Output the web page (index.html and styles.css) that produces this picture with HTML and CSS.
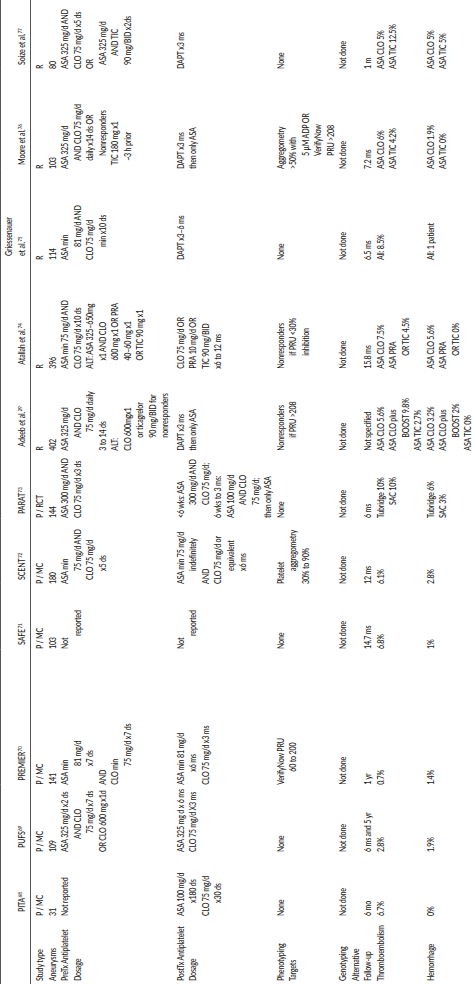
FILE: index.html
```html
<!DOCTYPE html>
<html lang="en">
<head>
<meta charset="utf-8">
<title>Antiplatelet regimens table</title>
<link rel="stylesheet" href="styles.css">
</head>
<body>
<div class="page">
  <div class="rot">
    <table class="t">
      <colgroup>
        <col class="c-lab"><col class="c-pita"><col class="c-pufs"><col class="c-premier"><col class="c-safe"><col class="c-scent"><col class="c-parat"><col class="c-adeeb"><col class="c-atallah"><col class="c-gries"><col class="c-moore"><col class="c-soize">
      </colgroup>
      <thead>
        <tr>
          <th></th>
          <th>PITA<sup>68</sup></th>
          <th>PUFS<sup>69</sup></th>
          <th>PREMIER<sup>70</sup></th>
          <th>SAFE<sup>71</sup></th>
          <th>SCENT<sup>72</sup></th>
          <th>PARAT<sup>73</sup></th>
          <th>Adeeb et al.<sup>29</sup></th>
          <th>Atallah et al.<sup>74</sup></th>
          <th><span class="l">Griessenauer</span><span class="l">et al.<sup>75</sup></span></th>
          <th>Moore et al.<sup>76</sup></th>
          <th>Soize et al.<sup>77</sup></th>
        </tr>
      </thead>
      <tbody>
        <tr class="first">
          <td class="lab">Study type</td>
          <td>P / MC</td><td>P / MC</td><td>P / MC</td><td>P / MC</td><td>P / MC</td><td>P / RCT</td><td>R</td><td>R</td><td>R</td><td>R</td><td>R</td>
        </tr>
        <tr>
          <td class="lab">Aneurysms</td>
          <td>31</td><td>109</td><td>141</td><td>103</td><td>180</td><td>144</td><td>402</td><td>396</td><td>114</td><td>103</td><td>80</td>
        </tr>
        <tr class="pre">
          <td class="lab"><span class="l">PreTx Antiplatelet</span><span class="l">Dosage</span></td>
          <td>Not reported</td>
          <td><span class="l">ASA 325 mg/d x2 ds</span><span class="l i3">AND CLO</span><span class="l i4">75 mg/d x7 ds</span><span class="l">OR CLO 600 mg x1d</span></td>
          <td><span class="l">ASA min</span><span class="l i4">81 mg/d</span><span class="l i4">x7 ds</span><span class="l">AND</span><span class="l">CLO min</span><span class="l i4">75 mg/d x7 ds</span></td>
          <td><span class="l">Not</span><span class="l i3">reported</span></td>
          <td><span class="l">ASA min</span><span class="l i3">75 mg/d AND</span><span class="l i1">CLO 75 mg/d</span><span class="l i3">x5 ds</span></td>
          <td><span class="l">ASA 300 mg/d AND</span><span class="l">CLO 75 mg/d x3 ds</span></td>
          <td><span class="l">ASA 325 mg/d</span><span class="l i3">AND CLO</span><span class="l i4">75 mg/d daily</span><span class="l">3 to 14 ds</span><span class="l">ALT:</span><span class="l">CLO 600mgx1</span><span class="l i3">or ticagrelor</span><span class="l i3">90 mg/BID for</span><span class="l i3">nonresponders</span></td>
          <td><span class="l">ASA min 75 mg/d AND</span><span class="l">CLO 75 mg/d x10 ds</span><span class="l">ALT: ASA 325–650mg</span><span class="l i2">x1 AND CLO</span><span class="l i2">600 mg x1 OR PRA</span><span class="l i2">40–60 mg x1</span><span class="l i2">OR TIC 90 mg x1</span></td>
          <td><span class="l">ASA min</span><span class="l i3">81 mg/d AND</span><span class="l">CLO 75 mg/d</span><span class="l i3">min x10 ds</span></td>
          <td><span class="l">ASA 325 mg/d</span><span class="l i2">AND CLO 75 mg/d</span><span class="l i2">daily x14 ds OR</span><span class="l i3">Nonresponders</span><span class="l i1">TIC 180 mg x1</span><span class="l i2">~3 h prior</span></td>
          <td><span class="l">ASA 325 mg/d AND</span><span class="l">CLO 75 mg/d x5 ds</span><span class="l">OR</span><span class="l i1">ASA 325 mg/d</span><span class="l i3">AND TIC</span><span class="l i1">90 mg/BID x2ds</span></td>
        </tr>
        <tr>
          <td class="lab"><span class="l">PostTx Antiplatelet</span><span class="l">Dosage</span></td>
          <td><span class="l">ASA 100 mg/d</span><span class="l i3">x180 ds</span><span class="l">CLO 75 mg/d</span><span class="l i3">x30 ds</span></td>
          <td><span class="l">ASA 325 mg d x 6 ms</span><span class="l">CLO 75 mg/d X3 ms</span></td>
          <td><span class="l">ASA min 81 mg/d</span><span class="l i3">x6 ms</span><span class="l">CLO 75 mg/d x3 ms</span></td>
          <td><span class="l">Not</span><span class="l i3">reported</span></td>
          <td><span class="l">ASA min 75 mg/d</span><span class="l i3">indefinitely</span><span class="l">AND</span><span class="l">CLO 75 mg/d or</span><span class="l i3">equivalent</span><span class="l i3">x6 ms</span></td>
          <td><span class="l">&lt;6 wks: ASA</span><span class="l i3">300 mg/d AND</span><span class="l i3">CLO 75 mg/d;</span><span class="l">6 wks to 3 ms:</span><span class="l">ASA 100 mg/d</span><span class="l i3">AND CLO</span><span class="l i3">75 mg/d;</span><span class="l">then only ASA</span></td>
          <td><span class="l">DAPT x3 ms</span><span class="l">then only ASA</span></td>
          <td><span class="l">CLO 75 mg/d OR</span><span class="l">PRA 10 mg/d OR</span><span class="l">TIC 90 mg/BID</span><span class="l">x6 to 12 ms</span></td>
          <td>DAPT x3–6 ms</td>
          <td><span class="l">DAPT x3 ms</span><span class="l">then only ASA</span></td>
          <td>DAPT x3 ms</td>
        </tr>
        <tr>
          <td class="lab"><span class="l">Phenotyping</span><span class="l">Targets</span></td>
          <td>None</td>
          <td>None</td>
          <td><span class="l">VerifyNow PRU</span><span class="l i3">60 to 200</span></td>
          <td>None</td>
          <td><span class="l">Platelet</span><span class="l i3">aggregometry</span><span class="l">30% to 90%</span></td>
          <td>None</td>
          <td><span class="l">Nonresponders</span><span class="l i3">if PRU &gt;208</span></td>
          <td><span class="l">Nonresponders</span><span class="l i3">if PRU &lt;30%</span><span class="l i3">inhibition</span></td>
          <td>None</td>
          <td><span class="l">Aggregometry</span><span class="l">&gt;50% with</span><span class="l i3">5 μM ADP OR</span><span class="l i3">VerifyNow</span><span class="l i3">PRU &gt;208</span></td>
          <td>None</td>
        </tr>
        <tr>
          <td class="lab">Genotyping</td>
          <td>Not done</td><td>Not done</td><td>Not done</td><td>Not done</td><td>Not done</td><td>Not done</td><td>Not done</td><td>Not done</td><td>Not done</td><td>Not done</td><td>Not done</td>
        </tr>
        <tr>
          <td class="lab">Alternative</td>
          <td></td><td></td><td></td><td></td><td></td><td></td><td></td><td></td><td></td><td></td><td></td>
        </tr>
        <tr>
          <td class="lab">Follow-up</td>
          <td>6 mo</td><td>6 ms and 5 yr</td><td>1 yr</td><td>14.7 ms</td><td>12 ms</td><td>6 ms</td><td>Not specified</td><td>15.8 ms</td><td>6.5 ms</td><td>7.2 ms</td><td>1 m</td>
        </tr>
        <tr>
          <td class="lab">Thromboembolism</td>
          <td>6.7%</td>
          <td>2.8%</td>
          <td>0.7%</td>
          <td>6.8%</td>
          <td>6.1%</td>
          <td><span class="l">Tubridge 10%</span><span class="l i3">SAC 10%</span></td>
          <td><span class="l">ASA CLO 5.6%</span><span class="l">ASA CLO plus</span><span class="l i3">BOOST 9.8%</span><span class="l">ASA TIC 2.7%</span></td>
          <td><span class="l">ASA CLO 7.5%</span><span class="l">ASA PRA</span><span class="l i3">OR TIC 4.5%</span></td>
          <td>All: 8.5%</td>
          <td><span class="l">ASA CLO 6%</span><span class="l">ASA TIC 4.2%</span></td>
          <td><span class="l">ASA CLO 5%</span><span class="l">ASA TIC 12.5%</span></td>
        </tr>
        <tr class="last">
          <td class="lab">Hemorrhage</td>
          <td>0%</td>
          <td>1.9%</td>
          <td>1.4%</td>
          <td>1%</td>
          <td>2.8%</td>
          <td><span class="l">Tubridge 6%</span><span class="l">SAC 3%</span></td>
          <td><span class="l">ASA CLO 3.2%</span><span class="l">ASA CLO plus</span><span class="l i3">BOOST 2%</span><span class="l">ASA TIC 0%</span></td>
          <td><span class="l">ASA CLO 5.6%</span><span class="l">ASA PRA</span><span class="l i3">OR TIC 0%</span></td>
          <td>All: 1 patient</td>
          <td><span class="l">ASA CLO 1.9%</span><span class="l">ASA TIC 0%</span></td>
          <td><span class="l">ASA CLO 5%</span><span class="l">ASA TIC 5%</span></td>
        </tr>
      </tbody>
    </table>
  </div>
</div>
</body>
</html>
```

FILE: styles.css
```css
html, body {
  margin: 0;
  padding: 0;
  background: #ffffff;
}

body {
  width: 474px;
  height: 984px;
  overflow: hidden;
}

.page {
  width: 474px;
  height: 984px;
  overflow: hidden;
}

/* the table is laid out in its natural (landscape) direction and turned a quarter anti-clockwise */
.rot {
  width: 984px;
  height: 474px;
  transform-origin: 0 0;
  transform: translateY(984px) rotate(-90deg);
}

/* the printed face is a narrow humanist sans: emulate it by condensing Lato horizontally */
.t {
  border-collapse: collapse;
  table-layout: fixed;
  width: 1200px;
  transform-origin: 0 0;
  transform: scaleX(0.82);
  font-family: Lato, "Liberation Sans", sans-serif;
  font-size: 8.7px;
  font-weight: 500;
  letter-spacing: -0.25px;
  line-height: 12.5px;
  color: #1a1a1a;
}

.c-lab { width: 82.9px; }
.c-pita { width: 78px; }
.c-pufs { width: 82px; }
.c-premier { width: 165.6px; }
.c-safe { width: 79.3px; }
.c-scent { width: 80.5px; }
.c-parat { width: 82px; }
.c-adeeb { width: 100px; }
.c-atallah { width: 132.6px; }
.c-gries { width: 111px; }
.c-moore { width: 122px; }
.c-soize { width: 84.1px; }

.t th,
.t td {
  padding: 0;
  text-align: left;
  vertical-align: top;
  font-weight: 500;
  white-space: nowrap;
  overflow: visible;
}

.t thead th {
  vertical-align: bottom;
  padding: 2px 0 2px 5px;
  border-top: 1.5px solid #555;
  border-bottom: 1.5px solid #555;
}

.t sup {
  font-size: 5.8px;
  line-height: 0;
  vertical-align: 3px;
  margin-left: 0.5px;
}

.t td.lab {
  padding-left: 3.6px;
}

.t tr.first td {
  padding-top: 3px;
}

.t tr.pre td {
  padding-bottom: 3px;
}

.l {
  display: block;
}

.i1 { padding-left: 5px; }
.i2 { padding-left: 10px; }
.i3 { padding-left: 16px; }
.i4 { padding-left: 23px; }
```
